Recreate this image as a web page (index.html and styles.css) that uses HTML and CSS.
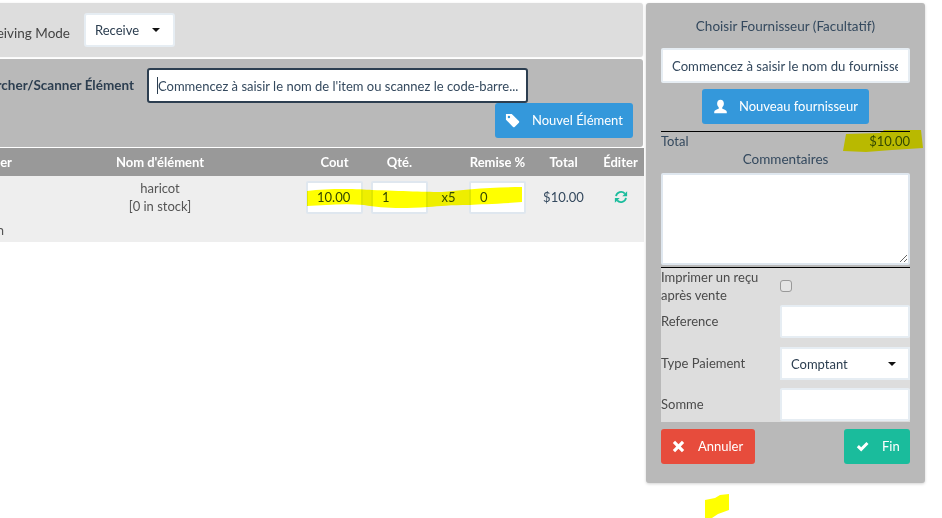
FILE: index.html
```html
<!DOCTYPE html>
<html lang="fr">
<head>
<meta charset="utf-8">
<title>Réception</title>
<link rel="stylesheet" href="styles.css">
</head>
<body>
<div class="page">
  <main class="left">
    <section class="mode-panel">
      <span class="label">Receiving Mode</span>
      <div class="select select-mode"><span>Receive</span><i class="caret"></i></div>
    </section>
    <section class="search-panel">
      <div class="search-row">
        <span class="label">Rechercher/Scanner Élément</span>
        <div class="search-box">
          <input class="search-input" type="text" placeholder="Commencez à saisir le nom de l'item ou scannez le code-barre...">
        </div>
      </div>
      <div class="search-actions">
        <a class="btn btn-blue btn-new">
          <svg class="ico" viewBox="0 0 16 16"><path d="M1 1h6.200l7.600 7.600a1.200 1.200 0 0 1 0 1.700l-4.500 4.500a1.200 1.200 0 0 1-1.700 0L1 7.200zM4.200 3A1.300 1.300 0 1 0 4.200 5.600 1.300 1.300 0 0 0 4.200 3z" fill="#fff" fill-rule="evenodd"/></svg>
          <span>Nouvel Élément</span>
        </a>
      </div>
    </section>
    <table class="cart">
      <colgroup>
        <col class="c-del"><col class="c-name"><col class="c-gap"><col class="c-cost"><col class="c-qty"><col class="c-mult"><col class="c-disc"><col class="c-total"><col class="c-edit">
      </colgroup>
      <thead>
        <tr><th>Supprimer</th><th>Nom d'élément</th><th></th><th>Cout</th><th>Qté.</th><th></th><th>Remise %</th><th>Total</th><th>Éditer</th></tr>
      </thead>
      <tbody>
        <tr class="item">
          <td></td>
          <td class="item-name">haricot<br>[0 in stock]</td>
          <td></td>
          <td><input class="cell-input" type="text" value="10.00"></td>
          <td><input class="cell-input" type="text" value="1"></td>
          <td>x5</td>
          <td><input class="cell-input" type="text" value="0"></td>
          <td>$10.00</td>
          <td>
            <svg class="refresh" viewBox="0 0 16 16" fill="none"><path d="M2.300 7A5.800 5.800 0 0 1 12.400 4.200" stroke="#1abc9c" stroke-width="2"/><path d="M15 1.500V7H9.500z" fill="#1abc9c"/><path d="M13.700 9A5.800 5.800 0 0 1 3.600 11.800" stroke="#1abc9c" stroke-width="2"/><path d="M1 14.500V9H6.500z" fill="#1abc9c"/></svg>
          </td>
        </tr>
        <tr class="desc"><td>Description</td><td colspan="8"></td></tr>
      </tbody>
    </table>
  </main>

  <aside class="side">
    <h2 class="side-title">Choisir Fournisseur (Facultatif)</h2>
    <input class="field supplier" type="text" placeholder="Commencez à saisir le nom du fournisseur">
    <a class="btn btn-blue btn-supplier">
      <svg class="ico" viewBox="0 0 16 16"><path d="M8 .8c2.300 0 3.600 1.700 3.600 4 0 1.700-.7 3.200-1.700 4v1.500c2 .7 4.800 1.500 4.800 3.200v1.700H1.300v-1.700c0-1.700 2.800-2.500 4.800-3.200V8.800c-1-.8-1.700-2.300-1.700-4 0-2.300 1.300-4 3.600-4z" fill="#fff"/></svg>
      <span>Nouveau fournisseur</span>
    </a>
    <div class="total-row"><span>Total</span><span>$10.00</span></div>
    <div class="comment-title">Commentaires</div>
    <textarea class="comments"></textarea>
    <div class="options">
      <div class="opt opt-print">
        <span class="opt-label">Imprimer un reçu après vente</span>
        <input class="check" type="checkbox">
      </div>
      <div class="opt">
        <span class="opt-label">Reference</span>
        <input class="field opt-field" type="text">
      </div>
      <div class="opt">
        <span class="opt-label">Type Paiement</span>
        <div class="select opt-field select-pay"><span>Comptant</span><i class="caret"></i></div>
      </div>
      <div class="opt">
        <span class="opt-label">Somme</span>
        <input class="field opt-field" type="text">
      </div>
    </div>
    <div class="actions">
      <a class="btn btn-red">
        <svg class="ico ico-sm" viewBox="0 0 16 16"><path d="M3.800 1 8 5.200 12.200 1 15 3.800 10.800 8 15 12.200 12.200 15 8 10.800 3.800 15 1 12.200 5.200 8 1 3.800z" fill="#fff"/></svg>
        <span>Annuler</span>
      </a>
      <a class="btn btn-green">
        <svg class="ico ico-sm" viewBox="0 0 16 16"><path d="M1 8.800 3.600 6.200 6.400 9 12.800 2.400 15.400 5 6.400 14z" fill="#fff"/></svg>
        <span>Fin</span>
      </a>
    </div>
  </aside>
</div>
<svg class="marks" viewBox="0 0 942 518" width="942" height="518">
  <path d="M307 191C330 188 360 189 372 190C400 191 430 192 442 192C460 190 490 187 522 187V202C500 204 480 204 470 205C450 205 440 206 428 207C400 209 380 208 364 205C345 203 325 205 307 206Z" fill="#ffff00"/>
  <path d="M846 134L880 133 884 130H921L923 148 892 150 866 152 843 151Z" fill="#ffff00"/>
  <path d="M705 500 715 498 720 495 729 494 729 510 718 514 712 518 705 518Z" fill="#ffff00"/>
</svg>
</body>
</html>
```
FILE: styles.css
```css
* { box-sizing: border-box; }
html, body { margin: 0; padding: 0; height: 518px; overflow: hidden; background: #fff; }
body { font-family: Lato, "Open Sans", sans-serif; font-size: 13px; line-height: 18px; color: #34495e; position: relative; }
.page { display: flex; align-items: flex-start; padding-top: 3px; width: 1042px; margin-left: -100px; }
.left { width: 744px; flex: none; }

.mode-panel { display: flex; align-items: center; justify-content: flex-end; height: 54px; background: #ddd; border-radius: 3px; margin-right: 1px; margin-bottom: 2px; padding-right: 468px; box-shadow: 0 0 2px rgba(0,0,0,.08); }
.mode-panel .label { margin-right: 14px; margin-top: 6px; color: #444; font-size: 13.500px; }

.select { display: flex; align-items: center; justify-content: space-between; height: 34px; background: #fff; border: 2px solid #e6edf3; color: #2c3e50; padding: 0 13px 0 9px; }
.select-mode { width: 91px; border-radius: 3px; }
.caret { width: 0; height: 0; border-left: 4px solid transparent; border-right: 4px solid transparent; border-top: 4px solid #111; }

.search-panel { height: 88px; background: #b9b9b9; border-radius: 3px; margin-right: 1px; margin-bottom: 1px; padding-top: 9px; }
.search-row { display: flex; align-items: center; justify-content: flex-end; padding-right: 115px; }
.search-row .label { margin-right: 13px; margin-top: -1px; color: #2c3e50; font-weight: 700; font-size: 13.500px; }
.search-box { position: relative; width: 381px; height: 35px; }
.search-box::after { content: ""; position: absolute; left: 10px; top: 9px; width: 1px; height: 17px; background: #2c3e50; }
.search-input { width: 100%; height: 100%; border: 2px solid #2c3e50; border-radius: 3px; background: #fff; padding: 0 6px 0 9px; font: inherit; color: #34495e; outline: 0; }
.search-input::placeholder, .supplier::placeholder { color: #34495e; opacity: 1; }
.search-actions { display: flex; justify-content: flex-end; padding-right: 10px; }

.btn { display: inline-flex; align-items: center; height: 35px; border-radius: 3px; color: #fff; font-size: 13px; white-space: nowrap; }
.btn span { margin-top: -2px; }
.btn-blue { background: #3498db; }
.btn-new { width: 138px; padding-left: 10px; }
.btn-new .ico { margin-right: 12px; }
.ico { width: 15px; height: 15px; flex: none; }
.ico-sm { width: 13px; height: 13px; }

.cart { width: 744px; border-collapse: collapse; table-layout: fixed; }
.c-del { width: 176px; }
.c-name { width: 168px; }
.c-gap { width: 58px; }
.c-cost, .c-qty, .c-disc { width: 65px; }
.c-mult { width: 33px; }
.c-total { width: 67px; }
.c-edit { width: 47px; }
.cart th { height: 28px; padding: 0; background: #999; color: #fff; font-weight: 700; font-size: 13px; text-align: center; white-space: nowrap; }
.cart th:first-child { padding-right: 12px; }
.cart td { padding: 0; background: #eee; text-align: center; vertical-align: middle; }
.item td { height: 42px; }
.item-name { color: #555; }
.desc td { height: 24px; text-align: right; padding-right: 72px; color: #555; }
.cell-input { width: 57px; height: 33px; border: 2px solid #dfe7ef; border-radius: 2px; background: #fff; text-align: left; padding: 0 9px; font: inherit; color: #34495e; display: block; margin: 0 auto; }
.refresh { width: 14px; height: 14px; display: block; margin: 0 auto; }

.side { width: 279px; height: 480px; flex: none; margin-left: 2px; background: #b9b9b9; border-radius: 3px; box-shadow: 0 1px 3px rgba(0,0,0,.18); padding: 0 15px; display: flex; flex-direction: column; }
.side-title { margin: 14px 0 13px; font-size: 13.500px; font-weight: 400; line-height: 18px; text-align: center; color: #34495e; }
.field { border: 2px solid #e6edf3; background: #fff; font: inherit; color: #34495e; border-radius: 2px; outline: 0; }
.supplier { width: 249px; height: 35px; padding: 0 10px 0 9px; flex: none; font-size: 13.150px; }
.btn-supplier { align-self: center; width: 167px; margin-top: 6px; padding-left: 11px; flex: none; }
.btn-supplier .ico { margin-right: 11px; }
.total-row { display: flex; justify-content: space-between; border-top: 1px solid #000; margin-top: 7px; height: 19px; line-height: 18px; }
.comment-title { text-align: center; height: 18px; line-height: 18px; margin-bottom: 5px; font-size: 13.500px; }
.comments { width: 249px; height: 92px; flex: none; display: block; border: 2px solid #dfe7ef; border-radius: 2px; background: #fff; margin: 0; padding: 6px; font: inherit; }
.options { background: #ddd; border-top: 1px solid #000; margin-top: 2px; height: 155px; display: flex; flex-direction: column; color: #4a4a4a; }
.opt { display: flex; align-items: center; height: 33px; margin-bottom: 9px; }
.opt:nth-child(3) { margin-bottom: 8px; }
.opt:last-child { margin-bottom: 0; }
.opt-print { height: 37px; margin-bottom: 0; }
.opt-label { width: 119px; flex: none; margin-top: -2px; }
.opt-field { width: 130px; height: 33px; }
.select-pay { padding: 0 12px 0 9px; }
.check { appearance: none; width: 12px; height: 12px; margin: -2px 0 0 0; background: #e4e4e4; border: 1px solid #999; border-radius: 3px; }
.actions { display: flex; justify-content: space-between; margin-top: 7px; }
.btn-red { background: #e74c3c; width: 94px; padding-left: 11px; }
.btn-red .ico { margin-right: 13px; }
.btn-green { background: #1abc9c; width: 66px; padding-left: 12px; }
.btn-green .ico { margin-right: 13px; }

.marks { position: absolute; left: 0; top: 0; mix-blend-mode: multiply; pointer-events: none; }
```
